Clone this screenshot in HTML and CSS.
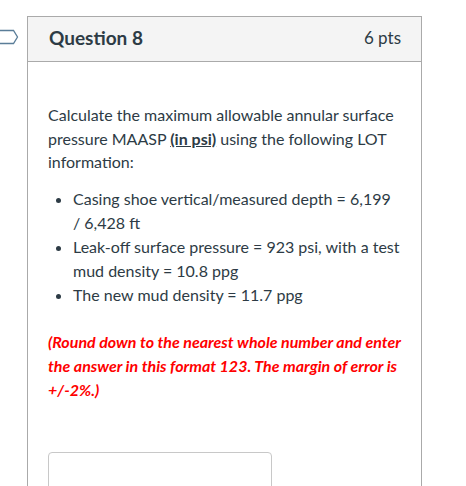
FILE: index.html
```html
<!DOCTYPE html>
<html>
<head>
<meta charset="utf-8">
<link rel="stylesheet" href="styles.css">
</head>
<body>
<div class="page">
  <svg class="marker" width="20" height="18" viewBox="0 0 20 18">
    <path d="M-2 1.5 H13.5 L17.5 8 L13.5 14.5 H-2" fill="none" stroke="#5a7d98" stroke-width="1.3"/>
  </svg>
  <div class="card">
    <div class="header">
      <span class="title">Question 8</span>
      <span class="pts">6 pts</span>
    </div>
    <div class="body">
      <p class="intro">Calculate the maximum allowable annular surface pressure MAASP <strong class="u">(in psi)</strong> using the following LOT information:</p>
      <ul class="list">
        <li>Casing shoe vertical/measured depth = 6,199 / 6,428 ft</li>
        <li>Leak-off surface pressure = 923 psi, with a test mud density = 10.8 ppg</li>
        <li>The new mud density = 11.7 ppg</li>
      </ul>
      <p class="note">(Round down to the nearest whole number and enter the answer in this format 123. The margin of error is +/-2%.)</p>
      <div class="answer"></div>
    </div>
  </div>
</div>
</body>
</html>
```
FILE: styles.css
```css
html, body {
  margin: 0;
  padding: 0;
  background: #ffffff;
}
.page {
  position: relative;
  padding-top: 16px;
  font-family: Lato, "Open Sans", sans-serif;
  color: #2d3b45;
}
.marker {
  position: absolute;
  left: 0;
  top: 29px;
}
.card {
  margin-left: 27px;
  width: 395px;
  border: 1px solid #aaaaaa;
  border-bottom: none;
  height: 480px;
  box-sizing: border-box;
}
.header {
  display: flex;
  justify-content: space-between;
  align-items: center;
  height: 45px;
  box-sizing: border-box;
  background: #f4f4f4;
  border-bottom: 1px solid #aaaaaa;
  padding: 0 20px 4px 21px;
}
.title {
  font-weight: 700;
  font-size: 19px;
}
.pts {
  font-size: 17px;
}
.body {
  padding: 41px 19px 0 20px;
  font-size: 16px;
  line-height: 23.5px;
}
.intro {
  margin: 0;
}
.u {
  text-decoration: underline;
}
.list {
  margin: 13px 0 0 0;
  padding-left: 25px;
  line-height: 24px;
}
.note {
  margin: 23px 0 0 0;
  color: #ff0000;
  font-style: italic;
  font-weight: 700;
  line-height: 24px;
}
.answer {
  margin-top: 50px;
  width: 224px;
  height: 40px;
  border: 1px solid #c8c8c8;
  border-radius: 4px;
  box-sizing: border-box;
}
```
